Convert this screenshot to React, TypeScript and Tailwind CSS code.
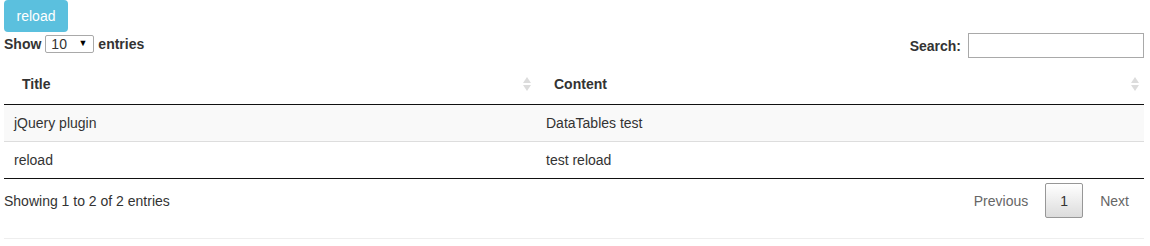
import { useState } from "react";

const rows = [
  { title: "jQuery plugin", content: "DataTables test" },
  { title: "reload", content: "test reload" },
];

function SortBoth() {
  return (
    <svg width="8" height="14" viewBox="0 0 8 14" className="shrink-0">
      <path d="M0 6 L4 0 L8 6 Z" fill="#dcdcdc" />
      <path d="M0 8 L4 14 L8 8 Z" fill="#dcdcdc" />
    </svg>
  );
}

export default function App() {
  const [search, setSearch] = useState("");

  return (
    <div className="w-[1150px] h-[246px] bg-white text-[14px] leading-5 text-[#333] font-['Liberation_Sans',Arial,sans-serif]">
      <div className="ml-[4px] w-[1140px]">
        <button
          type="button"
          className="block h-[32px] w-[64px] rounded-[4px] bg-[#5bc0de] text-[14px] leading-5 text-white"
        >
          reload
        </button>

        <div className="mt-[1px] flex items-start justify-between">
          <div className="flex h-[21px] items-center gap-[4px] font-bold">
            <span>Show</span>
            <div className="flex h-[18px] w-[49px] items-center justify-between rounded-[2px] border border-[#a9a9a9] pl-[5px] pr-[6px] font-normal">
              <span>10</span>
              <span className="text-[9px] leading-none text-black">▼</span>
            </div>
            <span>entries</span>
          </div>

          <label className="flex items-center gap-[7px] font-bold">
            <span>Search:</span>
            <input
              value={search}
              onChange={(e) => setSearch(e.target.value)}
              className="h-[25px] w-[176px] border border-[#a9a9a9] px-[4px] font-normal outline-none"
            />
          </label>
        </div>

        <table className="mt-[6px] w-full border-collapse">
          <thead>
            <tr className="border-b border-[#111]">
              <th className="w-[532px] px-[18px] py-[10px] text-left font-bold">
                <div className="flex items-center justify-between">
                  <span>Title</span>
                  <span className="-mr-[13px]">
                    <SortBoth />
                  </span>
                </div>
              </th>
              <th className="px-[18px] py-[10px] text-left font-bold">
                <div className="flex items-center justify-between">
                  <span>Content</span>
                  <span className="-mr-[13px]">
                    <SortBoth />
                  </span>
                </div>
              </th>
            </tr>
          </thead>
          <tbody>
            {rows.map((r, i) => (
              <tr
                key={i}
                className={
                  i % 2 === 0
                    ? "bg-[#f9f9f9]"
                    : "border-t border-[#ddd] bg-white"
                }
              >
                <td className="px-[10px] py-[8px]">{r.title}</td>
                <td className="px-[10px] py-[8px]">{r.content}</td>
              </tr>
            ))}
          </tbody>
        </table>
        <div className="border-t border-[#111]" />

        <div className="mt-[4px] flex items-center justify-between">
          <div>Showing 1 to 2 of 2 entries</div>
          <div className="mr-[1px] flex items-center gap-[3px]">
            <span className="px-[14px] py-[7px] text-[#666]">Previous</span>
            <span className="flex h-[35px] w-[38px] items-center justify-center rounded-[2px] border border-[#979797] bg-gradient-to-b from-white to-[#dcdcdc] text-[#333]">
              1
            </span>
            <span className="px-[14px] py-[7px] text-[#666]">Next</span>
          </div>
        </div>

        <div className="mt-[20px] border-t border-[#eee]" />
      </div>
    </div>
  );
}
